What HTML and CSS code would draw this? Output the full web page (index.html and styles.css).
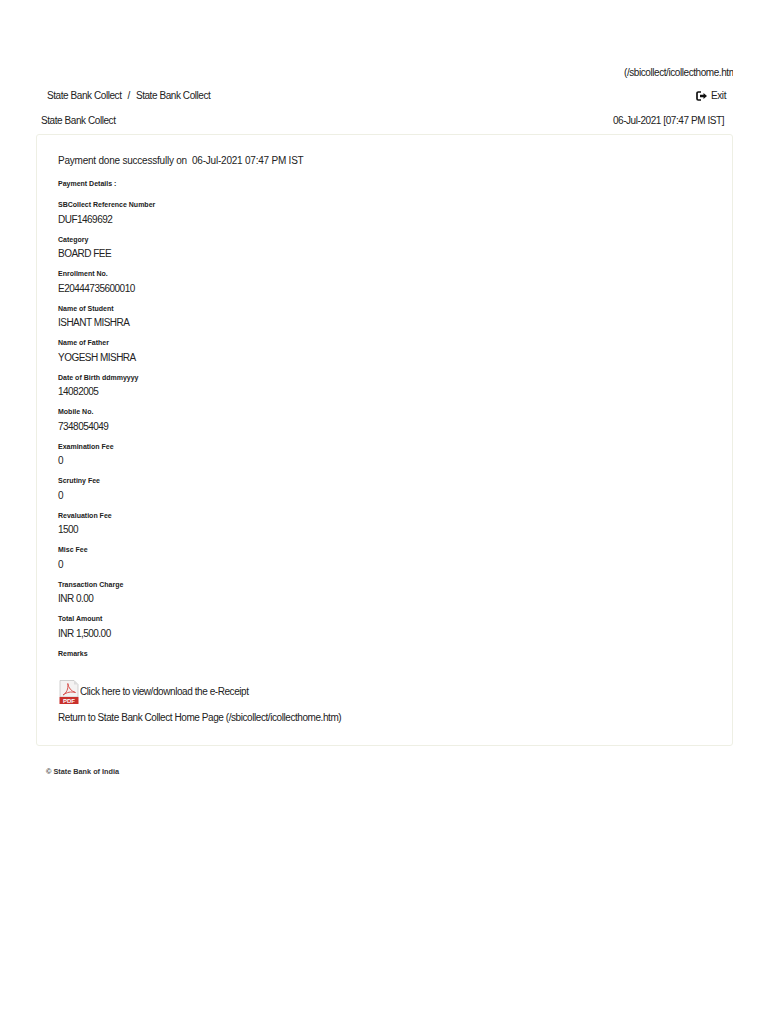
FILE: index.html
```html
<!DOCTYPE html>
<html lang="en">
<head>
<meta charset="utf-8">
<title>State Bank Collect</title>
<link rel="stylesheet" href="styles.css">
</head>
<body>
<div class="page">
  <div class="toplink"><span>(/sbicollect/icollecthome.htm)</span></div>
  <div class="crumbs">
    <span>State Bank Collect<span class="sep">/</span>State Bank Collect</span>
    <span class="exit"><svg class="exit-icon" viewBox="0 0 12 10" width="12" height="10"><path d="M5 1H2.200C1.500 1 1 1.500 1 2.200v5.600C1 8.500 1.500 9 2.200 9H5" fill="none" stroke="#111" stroke-width="1.700"/><path d="M4 3.800h3.500V2L11 5 7.500 8V6.200H4z" fill="#111"/></svg>Exit</span>
  </div>
  <div class="titlebar">
    <span>State Bank Collect</span>
    <span>06-Jul-2021 [07:47 PM IST]</span>
  </div>
  <main class="card">
    <p class="status">Payment done successfully on &nbsp;06-Jul-2021 07:47 PM IST</p>
    <p class="label details">Payment Details :</p>
    <div class="field"><div class="label">SBCollect Reference Number</div><div class="value">DUF1469692</div></div>
    <div class="field"><div class="label">Category</div><div class="value">BOARD FEE</div></div>
    <div class="field"><div class="label">Enrollment No.</div><div class="value">E20444735600010</div></div>
    <div class="field"><div class="label">Name of Student</div><div class="value">ISHANT MISHRA</div></div>
    <div class="field"><div class="label">Name of Father</div><div class="value">YOGESH MISHRA</div></div>
    <div class="field"><div class="label">Date of Birth ddmmyyyy</div><div class="value">14082005</div></div>
    <div class="field"><div class="label">Mobile No.</div><div class="value">7348054049</div></div>
    <div class="field"><div class="label">Examination Fee</div><div class="value">0</div></div>
    <div class="field"><div class="label">Scrutiny Fee</div><div class="value">0</div></div>
    <div class="field"><div class="label">Revaluation Fee</div><div class="value">1500</div></div>
    <div class="field"><div class="label">Misc Fee</div><div class="value">0</div></div>
    <div class="field"><div class="label">Transaction Charge</div><div class="value">INR 0.00</div></div>
    <div class="field"><div class="label">Total Amount</div><div class="value">INR 1,500.00</div></div>
    <div class="field remarks"><div class="label">Remarks</div></div>
    <div class="receipt">
      <svg class="pdf" viewBox="0 0 20 24" width="20" height="24">
        <path d="M1 .5h14l4 4V17H1z" fill="#f4f2f2" stroke="#bdbdbd" stroke-width=".7"/>
        <path d="M15 .5v4h4z" fill="#dcdcdc"/>
        <path d="M4 15c3.500-2 5.500-6 4.800-11.500C9.500 8 12 11 16.500 12.500 12 11.500 8 12 4 15z" fill="none" stroke="#d9534f" stroke-width="1"/>
        <rect x="0.500" y="17" width="19" height="7" fill="#c9302c"/>
        <text x="10" y="23" text-anchor="middle" class="pdf-text">PDF</text>
      </svg>
      <span>Click here to view/download the e-Receipt</span>
    </div>
    <p class="return">Return to State Bank Collect Home Page (/sbicollect/icollecthome.htm)</p>
  </main>
  <footer class="footer">© State Bank of India</footer>
</div>
</body>
</html>
```
FILE: styles.css
```css
html, body { margin: 0; padding: 0; background: #fff; }
body {
  font-family: "Liberation Sans", Arial, sans-serif;
  font-size: 10px;
  letter-spacing: -0.430px;
  color: #222;
  overflow-x: hidden;
}
.page { width: 768px; height: 1024px; overflow: hidden; padding-top: 67px; box-sizing: border-box; }
.toplink {
  margin-left: 36px; width: 697px; overflow: hidden; height: 12px; line-height: 12px;
  display: flex; justify-content: flex-end; white-space: nowrap;
}
.toplink span { width: 109px; overflow: hidden; }
.crumbs {
  display: flex; justify-content: space-between; align-items: center;
  height: 12px; line-height: 12px; margin-top: 11px; padding: 0 42px 0 47px;
}
.sep { margin: 0 6px; }
.exit { display: flex; align-items: center; gap: 3px; }
.exit-icon { display: block; }
.titlebar {
  display: flex; justify-content: space-between;
  height: 12px; line-height: 12px; margin-top: 13px; padding: 0 44px 0 41px;
}
.card {
  margin: 7px 35px 0 36px; height: 612px; box-sizing: border-box;
  border: 1px solid #eeefe4; border-radius: 3px; padding: 20px 21px 0;
}
.status { margin: 0; height: 12px; line-height: 12px; letter-spacing: -0.220px; }
.label { font-size: 7px; line-height: 9px; height: 9px; font-weight: bold; margin: 0; color: #222; letter-spacing: 0; }
.details { margin-top: 12px; margin-bottom: 12px; }
.field { height: 34.500px; }
.value { line-height: 12px; margin-top: 4.500px; letter-spacing: -0.520px; }
.remarks { height: 31px; }
.receipt { display: flex; align-items: center; height: 24px; gap: 1px; margin-left: 1px; }
.pdf { display: block; }
.pdf-text { font-size: 6px; font-weight: bold; fill: #fff; letter-spacing: 0; font-family: "Liberation Sans", Arial, sans-serif; }
.return { margin: 8px 0 0; line-height: 12px; }
.footer { margin: 21px 0 0 46px; font-size: 7.300px; line-height: 10px; font-weight: bold; color: #333; letter-spacing: 0; }
```
